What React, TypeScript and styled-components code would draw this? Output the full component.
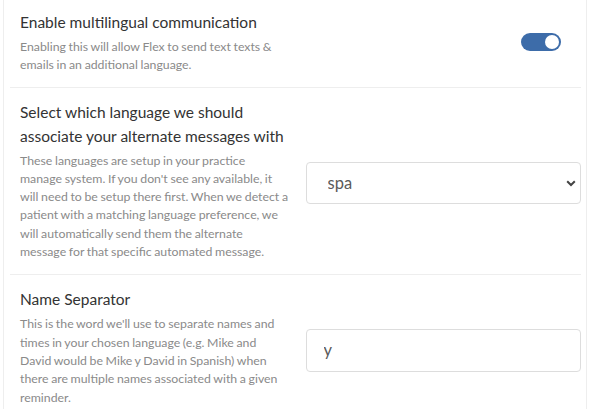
import React, { useState } from 'react';
import styled, { createGlobalStyle } from 'styled-components';

const GlobalStyle = createGlobalStyle`
  html, body {
    margin: 0;
    padding: 0;
    background: #ffffff;
  }
  body {
    font-family: Lato, 'Noto Sans', Arial, sans-serif;
    color: #333333;
  }
`;

const Card = styled.div`
  margin-left: 3px;
  width: 584px;
  box-sizing: border-box;
  border-left: 1px solid #eeeeee;
  border-right: 1px solid #eeeeee;
  padding: 0 5px 0 6px;
`;

const Section = styled.div`
  display: grid;
  grid-template-columns: 1fr 1fr;
  column-gap: 10px;
  align-items: center;
  padding: 12px 0 13px 10px;
  border-bottom: 1px solid #eeeeee;

  &:first-child {
    padding-top: 10px;
    padding-bottom: 12px;
  }
`;

const Info = styled.div`
  min-width: 0;
`;

const Title = styled.div`
  font-size: 15.5px;
  line-height: 24px;
  color: #333333;
`;

const Description = styled.p`
  margin: 4px 0 0;
  padding-right: 6.5px;
  font-size: 12.3px;
  line-height: 18.3px;
  word-spacing: -0.5px;
  color: #8a8a8a;
`;

const Control = styled.div<{ $drop?: number }>`
  display: flex;
  align-items: center;
  padding-top: ${({ $drop = 0 }) => $drop}px;
`;

const ToggleTrack = styled.button<{ $on: boolean }>`
  margin-left: auto;
  margin-right: 20px;
  width: 40px;
  height: 18px;
  padding: 2px;
  border: none;
  border-radius: 9px;
  background: ${({ $on }) => ($on ? '#3d6ca9' : '#cfcfcf')};
  display: flex;
  justify-content: ${({ $on }) => ($on ? 'flex-end' : 'flex-start')};
  cursor: pointer;
`;

const ToggleKnob = styled.span`
  width: 14px;
  height: 14px;
  border-radius: 50%;
  background: #ffffff;
`;

const SelectWrap = styled.div`
  position: relative;
  width: 100%;
`;

const Select = styled.select`
  width: 100%;
  height: 42px;
  box-sizing: border-box;
  appearance: none;
  border: 1px solid #dddddd;
  border-radius: 4px;
  background: #ffffff;
  padding: 0 30px 0 21px;
  font-family: inherit;
  font-size: 16.5px;
  color: #5a5a5a;
  outline: none;
`;

const Chevron = styled.svg`
  position: absolute;
  right: 5px;
  top: 18px;
  pointer-events: none;
`;

const TextInput = styled.input`
  width: 100%;
  height: 43px;
  box-sizing: border-box;
  border: 1px solid #dddddd;
  border-radius: 4px;
  padding: 0 17px;
  font-family: inherit;
  font-size: 16.5px;
  color: #5a5a5a;
  outline: none;
`;

const App: React.FC = () => {
  const [enabled, setEnabled] = useState(true);
  const [language, setLanguage] = useState('spa');
  const [separator, setSeparator] = useState('y');

  return (
    <>
      <GlobalStyle />
      <Card>
        <Section>
          <Info>
            <Title>Enable multilingual communication</Title>
            <Description>
              Enabling this will allow Flex to send text texts &amp; emails in an additional language.
            </Description>
          </Info>
          <Control>
            <ToggleTrack $on={enabled} onClick={() => setEnabled(!enabled)}>
              <ToggleKnob />
            </ToggleTrack>
          </Control>
        </Section>
        <Section>
          <Info>
            <Title>Select which language we should associate your alternate messages with</Title>
            <Description>
              These languages are setup in your practice manage system. If you don't see any available, it
              will need to be setup there first. When we detect a patient with a matching language
              preference, we will automatically send them the alternate message for that specific automated
              message.
            </Description>
          </Info>
          <Control $drop={6}>
            <SelectWrap>
              <Select value={language} onChange={(e) => setLanguage(e.target.value)}>
                <option value="spa">spa</option>
                <option value="eng">eng</option>
              </Select>
              <Chevron width="10" height="7" viewBox="0 0 10 7">
                <path d="M1.2 1.2 L5 5 L8.8 1.2" fill="none" stroke="#444" strokeWidth="2" />
              </Chevron>
            </SelectWrap>
          </Control>
        </Section>
        <Section>
          <Info>
            <Title>Name Separator</Title>
            <Description>
              This is the word we'll use to separate names and times in your chosen language (e.g. Mike and
              David would be Mike y David in Spanish) when there are multiple names associated with a given
              reminder.
            </Description>
          </Info>
          <Control $drop={6}>
            <TextInput value={separator} onChange={(e) => setSeparator(e.target.value)} />
          </Control>
        </Section>
      </Card>
    </>
  );
};

export default App;
